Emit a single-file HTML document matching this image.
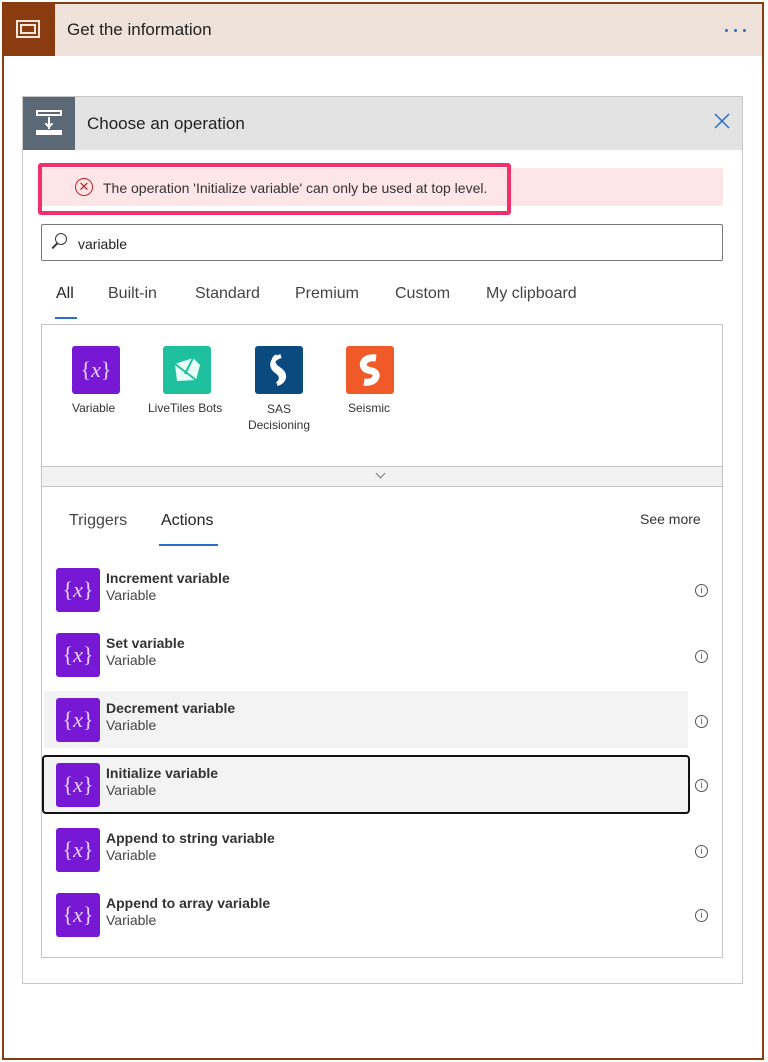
<!DOCTYPE html>
<html><head><style>
*{box-sizing:border-box;margin:0;padding:0}
body{width:768px;height:1062px;background:#fff;font-family:"Liberation Sans",sans-serif;position:relative;overflow:hidden;color:#222}
.a{position:absolute}
.vi{position:absolute;width:44px;height:44px;background:#7719d4;border-radius:3px;color:#e6d2ff;font-family:"Liberation Serif",serif;font-size:22px;display:flex;align-items:center;justify-content:center;font-style:normal}
.vi i{font-style:italic}
.t1{position:absolute;left:106px;font-weight:bold;font-size:14px;color:#333}
.t2{position:absolute;left:106px;font-size:14px;color:#444}
.inf{position:absolute;left:695px;width:13px;height:13px;border:1px solid #555;border-radius:50%;font-size:9px;text-align:center;line-height:11px;color:#555}
.dot{position:absolute;top:29px;width:3px;height:3px;border-radius:50%;background:#2a6fc9}
</style></head><body>
<div class="a" style="left:4px;top:4px;width:758px;height:52px;background:#efe2da"></div>
<div class="a" style="left:2px;top:2px;width:53px;height:54px;background:#8a3c10"></div>
<div class="a" style="left:2px;top:2px;width:762px;height:1058px;border:2px solid #8a3c10"></div>
<div class="a" style="left:16px;top:20px;width:24px;height:18px;border:2px solid #f4e6dc"></div>
<div class="a" style="left:20px;top:24px;width:16px;height:10px;border:2px solid #f4e6dc"></div>
<div class="a" style="left:67px;top:20px;font-size:17px">Get the information</div>
<div class="dot" style="left:725px"></div><div class="dot" style="left:734px"></div><div class="dot" style="left:743px"></div>

<div class="a" style="left:22px;top:96px;width:721px;height:888px;border:1px solid #c8c8c8"></div>
<div class="a" style="left:23px;top:97px;width:719px;height:53px;background:#e3e3e3"></div>
<div class="a" style="left:23px;top:97px;width:52px;height:53px;background:#5b6977"></div>
<div class="a" style="left:36px;top:110px;width:26px;height:6px;border:2px solid #fff"></div>
<div class="a" style="left:48px;top:117px;width:2px;height:12px;background:#fff"></div>
<div class="a" style="border-bottom:2px solid #fff;border-right:2px solid #fff;transform:rotate(45deg);width:6px;height:6px;left:46px;top:121px"></div>
<div class="a" style="left:36px;top:130px;width:26px;height:5px;background:#fff"></div>
<div class="a" style="left:87px;top:114px;font-size:17px">Choose an operation</div>
<svg class="a" style="left:713px;top:112px" width="18" height="18"><path d="M2 2L16 16M16 2L2 16" stroke="#2a6fc9" stroke-width="1.5"/></svg>

<div class="a" style="left:40px;top:168px;width:683px;height:38px;background:#fde5e8"></div>
<div class="a" style="left:38px;top:163px;width:473px;height:52px;border:4px solid #f2306c;border-radius:3px"></div>
<div class="a" style="left:75px;top:178px;width:18px;height:18px;border:1.5px solid #c4262e;border-radius:50%;color:#c4262e;font-size:13px;text-align:center;line-height:15px">✕</div>
<div class="a" style="left:103px;top:180px;font-size:14px;color:#333">The operation 'Initialize variable' can only be used at top level.</div>

<div class="a" style="left:41px;top:224px;width:682px;height:37px;border:1px solid #777;border-radius:2px"></div>
<div class="a" style="left:55px;top:233px;width:12px;height:12px;border:1.5px solid #333;border-radius:50%"></div>
<div class="a" style="left:51px;top:245px;width:7px;height:1.5px;background:#333;transform:rotate(-45deg)"></div>
<div class="a" style="left:78px;top:236px;font-size:14px">variable</div>

<div class="a" style="top:285px;left:56px;font-size:16px;color:#222">All</div>
<div class="a" style="left:55px;top:317px;width:22px;height:2px;background:#2a6fc9"></div>
<div class="a" style="top:285px;left:108px;font-size:16px;color:#444">Built-in</div>
<div class="a" style="top:285px;left:195px;font-size:16px;color:#444">Standard</div>
<div class="a" style="top:285px;left:295px;font-size:16px;color:#444">Premium</div>
<div class="a" style="top:285px;left:395px;font-size:16px;color:#444">Custom</div>
<div class="a" style="top:285px;left:486px;font-size:16px;color:#444">My clipboard</div>

<div class="a" style="left:41px;top:324px;width:682px;height:634px;border:1px solid #c4c4c4"></div>
<div class="vi" style="left:72px;top:346px;width:48px;height:48px">{<i>x</i>}</div>
<div class="a" style="left:163px;top:346px;width:48px;height:48px;background:#1fc09e;border-radius:3px"><svg width="48" height="48"><path d="M12 18 L30 12 L37 19 L33 34 L14 35 Z" fill="#e8fff8"/><path d="M12 18 L33 34 M30 12 L22 28" stroke="#1fc09e" stroke-width="2"/></svg></div>
<div class="a" style="left:255px;top:346px;width:48px;height:48px;background:#0a4a7e;border-radius:3px"><svg width="48" height="48"><path d="M26 10 C14 14 16 22 22 26 C28 30 26 36 22 38 M22 10 C18 12 16 18 24 23 C32 28 30 36 22 38" stroke="#fff" stroke-width="4" fill="none"/></svg></div>
<div class="a" style="left:346px;top:346px;width:48px;height:48px;background:#f05a28;border-radius:3px"><svg width="48" height="48"><path d="M30 12 C16 10 14 22 22 24 L26 25 C34 27 30 38 18 36" stroke="#fff" stroke-width="7" fill="none"/></svg></div>
<div class="a" style="left:72px;top:401px;font-size:12px;color:#333">Variable</div>
<div class="a" style="left:148px;top:401px;font-size:12px;color:#333">LiveTiles Bots</div>
<div class="a" style="left:240px;top:401px;width:78px;text-align:center;font-size:12px;color:#333;line-height:16px">SAS<br>Decisioning</div>
<div class="a" style="left:348px;top:401px;font-size:12px;color:#333">Seismic</div>
<div class="a" style="left:42px;top:466px;width:680px;height:21px;background:#f2f2f2;border-top:1px solid #c4c4c4;border-bottom:1px solid #c4c4c4"></div>
<div class="a" style="left:377px;top:470px;width:7px;height:7px;border-right:1px solid #777;border-bottom:1px solid #777;transform:rotate(45deg)"></div>

<div class="a" style="left:69px;top:512px;font-size:16px;color:#444">Triggers</div>
<div class="a" style="left:161px;top:512px;font-size:16px;color:#222">Actions</div>
<div class="a" style="left:159px;top:544px;width:59px;height:2px;background:#2a6fc9"></div>
<div class="a" style="left:640px;top:511px;font-size:14px;color:#333">See more</div>

<div class="a" style="left:44px;top:691px;width:644px;height:57px;background:#f3f3f3"></div>
<div class="a" style="left:42px;top:755px;width:648px;height:59px;background:#f3f3f3;border:2px solid #111;border-radius:4px"></div>

<div class="vi" style="left:56px;top:568px">{<i>x</i>}</div><div class="t1" style="top:570px">Increment variable</div><div class="t2" style="top:587px">Variable</div><div class="inf" style="top:584px">i</div>
<div class="vi" style="left:56px;top:633px">{<i>x</i>}</div><div class="t1" style="top:635px">Set variable</div><div class="t2" style="top:652px">Variable</div><div class="inf" style="top:650px">i</div>
<div class="vi" style="left:56px;top:698px">{<i>x</i>}</div><div class="t1" style="top:700px">Decrement variable</div><div class="t2" style="top:717px">Variable</div><div class="inf" style="top:715px">i</div>
<div class="vi" style="left:56px;top:763px">{<i>x</i>}</div><div class="t1" style="top:765px">Initialize variable</div><div class="t2" style="top:782px">Variable</div><div class="inf" style="top:779px">i</div>
<div class="vi" style="left:56px;top:828px">{<i>x</i>}</div><div class="t1" style="top:830px">Append to string variable</div><div class="t2" style="top:847px">Variable</div><div class="inf" style="top:845px">i</div>
<div class="vi" style="left:56px;top:893px">{<i>x</i>}</div><div class="t1" style="top:895px">Append to array variable</div><div class="t2" style="top:912px">Variable</div><div class="inf" style="top:909px">i</div>
</body></html>
